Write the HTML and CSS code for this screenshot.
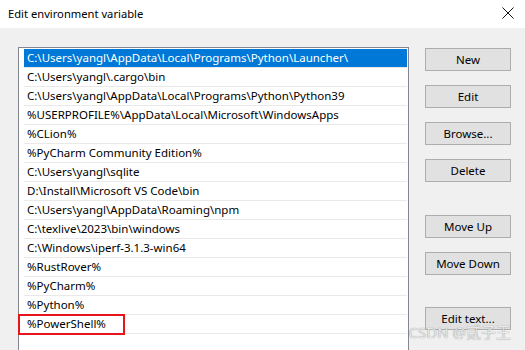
FILE: index.html
```html
<!DOCTYPE html>
<html lang="en">
<head>
    <meta charset="UTF-8">
    <title>Edit environment variable</title>
    <link rel="stylesheet" href="styles.css">
</head>
<body>
    <div class="window">
        <!-- Title bar -->
        <div class="titlebar">
            <span class="title">Edit environment variable</span>
            <svg class="close" width="12" height="12" viewBox="0 0 12 12">
                <path d="M0.5 0.5 L11.5 11.5 M11.5 0.5 L0.5 11.5" stroke="#111" stroke-width="1" fill="none"/>
            </svg>
        </div>

        <div class="content">
            <!-- Path list -->
            <ul class="listbox">
                <li class="row selected">C:\Users\yangl\AppData\Local\Programs\Python\Launcher\</li>
                <li class="row">C:\Users\yangl\.cargo\bin</li>
                <li class="row">C:\Users\yangl\AppData\Local\Programs\Python\Python39</li>
                <li class="row">%USERPROFILE%\AppData\Local\Microsoft\WindowsApps</li>
                <li class="row">%CLion%</li>
                <li class="row">%PyCharm Community Edition%</li>
                <li class="row">C:\Users\yangl\sqlite</li>
                <li class="row">D:\Install\Microsoft VS Code\bin</li>
                <li class="row">C:\Users\yangl\AppData\Roaming\npm</li>
                <li class="row">C:\texlive\2023\bin\windows</li>
                <li class="row">C:\Windows\iperf-3.1.3-win64</li>
                <li class="row">%RustRover%</li>
                <li class="row">%PyCharm%</li>
                <li class="row">%Python%</li>
                <li class="row marked">%PowerShell%<span class="highlight"></span></li>
            </ul>

            <!-- Buttons -->
            <div class="buttons">
                <div class="group">
                    <button>New</button>
                    <button>Edit</button>
                    <button>Browse...</button>
                    <button>Delete</button>
                </div>
                <div class="group move">
                    <button>Move Up</button>
                    <button>Move Down</button>
                </div>
                <div class="group text">
                    <button>Edit text...</button>
                </div>
            </div>
        </div>

        <div class="watermark">CSDN @贰子王</div>
    </div>
</body>
</html>
```

FILE: styles.css
```css
/* Global */
body {
    margin: 0;
    font-family: 'Noto Sans', 'Noto Sans CJK SC', sans-serif;
    font-size: 11.5px;
    color: #000;
    background: #f0f0f0;
}

.window {
    position: relative;
    width: 525px;
    height: 350px;
    overflow: hidden;
    background: #f0f0f0;
}

/* Title bar */
.titlebar {
    height: 28px;
    background: #fff;
    display: flex;
    align-items: center;
    justify-content: space-between;
    padding: 0 11px 2px 8px;
    box-sizing: border-box;
}

.title {
    font-size: 11.2px;
}

/* Content */
.content {
    display: flex;
    padding: 19px 0 0 18px;
    gap: 16px;
}

.listbox {
    list-style: none;
    margin: 0;
    padding: 1px 1px 0 5px;
    width: 383px;
    height: 320px;
    background: #fff;
    border: 1px solid #828790;
}

.row {
    position: relative;
    height: 18px;
    line-height: 18px;
    padding-left: 3px;
    border-bottom: 1px solid #e9e9e9;
    white-space: nowrap;
}

.row.selected {
    background: #0078d7;
    color: #fff;
}

.highlight {
    position: absolute;
    left: -6px;
    top: -1px;
    width: 103px;
    height: 17px;
    border: 2px solid #e8141c;
}

/* Buttons */
.buttons {
    display: flex;
    flex-direction: column;
    padding-top: 1px;
}

.group {
    display: flex;
    flex-direction: column;
    gap: 14px;
}

.group.move {
    margin-top: 33px;
}

.group.text {
    margin-top: 32px;
}

button {
    width: 86px;
    height: 23px;
    padding: 0;
    font-family: 'Noto Sans', sans-serif;
    font-size: 11.5px;
    color: #000;
    background: #e1e1e1;
    border: 1px solid #adadad;
}

/* Watermark */
.watermark {
    position: absolute;
    right: 14px;
    bottom: 8px;
    font-size: 15px;
    color: #e8e8e8;
    text-shadow: 0 0 1px #777;
}
```
